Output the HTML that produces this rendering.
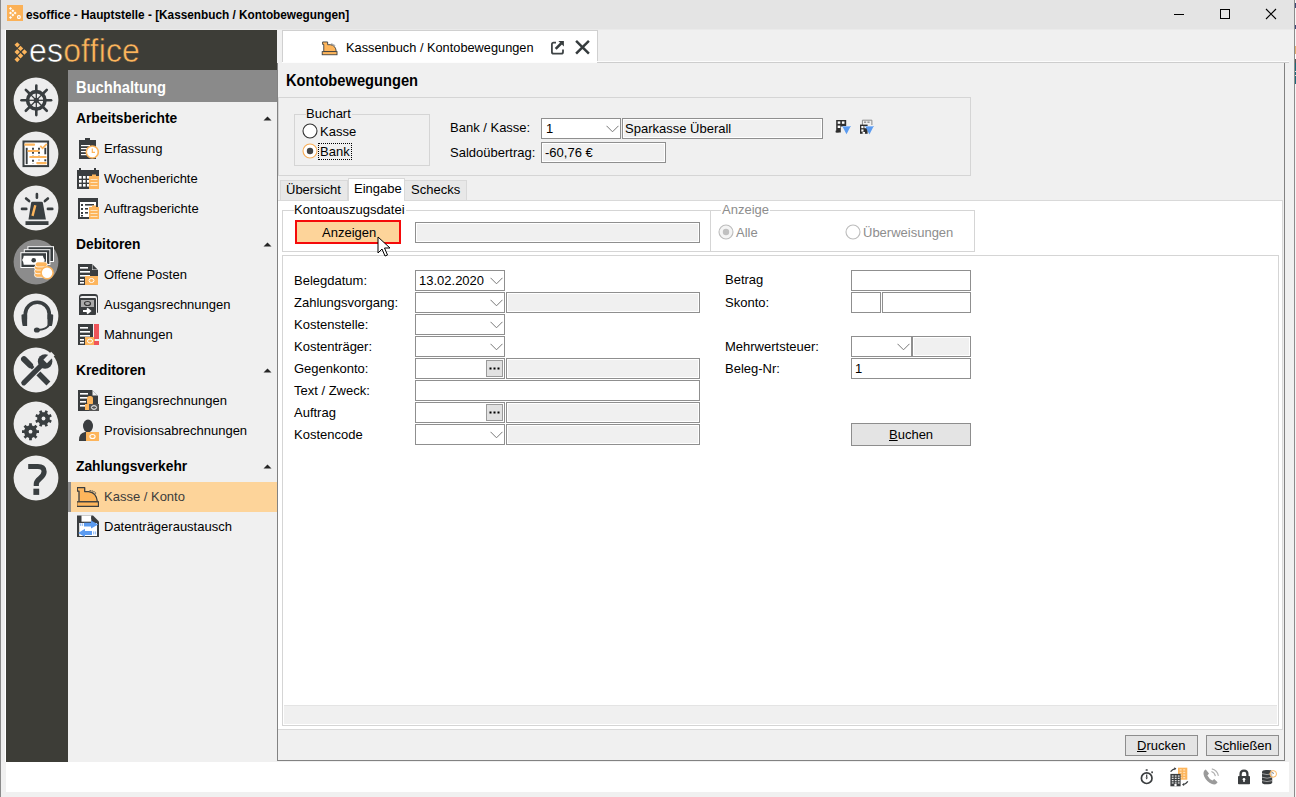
<!DOCTYPE html>
<html><head><meta charset="utf-8">
<style>
*{box-sizing:border-box;margin:0;padding:0}
html,body{width:1296px;height:797px;overflow:hidden;background:#f0f0f0;font-family:"Liberation Sans",sans-serif;font-size:13px;color:#000}
body{position:relative}
.a{position:absolute}
.t{position:absolute;white-space:nowrap;line-height:1;font-size:13px}
.sx{transform-origin:0 0;display:inline-block}
</style></head><body>
<div class="a" style="left:0px;top:0px;width:1px;height:797px;background:#8a8a8a"></div>
<div class="a" style="left:1px;top:0px;width:1293px;height:29px;background:#e4e4e4"></div>
<div class="a" style="left:1px;top:29px;width:1293px;height:1px;background:#eaeaea"></div>
<div class="a" style="left:1294px;top:0px;width:1px;height:797px;background:#8c8c8c"></div>
<div class="a" style="left:1295px;top:0px;width:1px;height:797px;background:#f4f4f4"></div>
<div class="a" style="left:1295px;top:3px;width:1px;height:5px;background:#3a4a7a"></div>
<div class="a" style="left:1295px;top:25px;width:1px;height:4px;background:#3a4a7a"></div>
<div class="a" style="left:1295px;top:46px;width:1px;height:8px;background:#e0b070"></div>
<div class="a" style="left:1295px;top:54px;width:1px;height:5px;background:#fff"></div>
<div class="a" style="left:1295px;top:59px;width:1px;height:4px;background:#555"></div>
<div class="a" style="left:1295px;top:63px;width:1px;height:21px;background:#1b6a7a"></div>
<div class="a" style="left:1295px;top:71px;width:1px;height:1px;background:#e0e0e0"></div>
<div class="a" style="left:1295px;top:75px;width:1px;height:1px;background:#e0e0e0"></div>
<svg class="a" style="left:7px;top:5px" width="16" height="16" viewBox="0 0 16 16"><rect width="16" height="16" fill="#fbb157"/><g fill="#fff"><rect x="2.45" y="2.45" width="2.1" height="2.1" transform="rotate(45 3.5 3.5)"/><rect x="4.80" y="4.80" width="2.1" height="2.1" transform="rotate(45 5.85 5.85)"/><rect x="2.45" y="6.90" width="2.1" height="2.1" transform="rotate(45 3.5 7.95)"/><rect x="7.05" y="6.90" width="2.1" height="2.1" transform="rotate(45 8.1 7.95)"/><rect x="4.80" y="9.05" width="2.1" height="2.1" transform="rotate(45 5.85 10.1)"/><rect x="2.45" y="11.45" width="2.1" height="2.1" transform="rotate(45 3.5 12.5)"/></g><rect x="10.6" y="10.6" width="2.6" height="2.8" rx="1" fill="none" stroke="#fff" stroke-width="1.1"/></svg>
<div class="t" style="left:26px;top:9px;font-size:12px;color:#000;font-weight:bold;"><span class="sx" style="transform:scaleX(0.983)">esoffice - Hauptstelle - [Kassenbuch / Kontobewegungen]</span></div>
<div class="a" style="left:1174px;top:14px;width:10px;height:1px;background:#000"></div>
<div class="a" style="left:1220px;top:9px;width:10px;height:10px;border:1px solid #000"></div>
<svg class="a" style="left:1265px;top:8px" width="12" height="12" viewBox="0 0 12 12"><path d="M1 1L11 11M11 1L1 11" stroke="#000" stroke-width="1.1"/></svg>
<div class="a" style="left:1px;top:30px;width:4px;height:732px;background:#eeeeee"></div>
<div class="a" style="left:5px;top:30px;width:1px;height:732px;background:#ffffff"></div>
<div class="a" style="left:6px;top:30px;width:271px;height:40px;background:#3d3d37"></div>
<div class="a" style="left:6px;top:70px;width:62px;height:692px;background:#3d3d37"></div>
<svg class="a" style="left:12px;top:40px" width="16" height="24" viewBox="0 0 16 24"><rect x="3.2999999999999994" y="2.9500000000000015" width="3.8" height="3.8" transform="rotate(45 5.199999999999999 4.850000000000001)" fill="#fdb55c"/><rect x="6.65" y="6.499999999999998" width="3.8" height="3.8" transform="rotate(45 8.55 8.399999999999999)" fill="#fdb55c"/><rect x="10.499999999999998" y="10.149999999999997" width="3.8" height="3.8" transform="rotate(45 12.399999999999999 12.049999999999997)" fill="#fdb55c"/><rect x="3.2999999999999994" y="10.149999999999997" width="3.8" height="3.8" transform="rotate(45 5.199999999999999 12.049999999999997)" fill="#fdb55c"/><rect x="6.65" y="13.85" width="3.8" height="3.8" transform="rotate(45 8.55 15.75)" fill="#fdb55c"/><rect x="3.2999999999999994" y="17.550000000000004" width="3.8" height="3.8" transform="rotate(45 5.199999999999999 19.450000000000003)" fill="#fdb55c"/></svg>
<div class="t" style="left:29px;top:33px;font-size:34px;color:#fff;-webkit-text-stroke:0.55px #3d3d37;letter-spacing:0.2px;"><span class="sx" style="transform:scaleX(0.94)">es<span style="color:#fdb55c">office</span></span></div>
<svg class="a" style="left:13px;top:77px" width="46" height="46" viewBox="0 0 46 46"><circle cx="23" cy="23" r="22.4" fill="#ededed"/><g transform="translate(23.3 23.3)"><g stroke="#393e40" stroke-linecap="round"><line x1="0" y1="0" x2="8.00" y2="0.00" stroke-width="1.3" stroke-linecap="butt"/><line x1="10.00" y1="0.00" x2="14.80" y2="0.00" stroke-width="2.6"/><line x1="0" y1="0" x2="5.66" y2="5.66" stroke-width="1.3" stroke-linecap="butt"/><line x1="7.07" y1="7.07" x2="10.47" y2="10.47" stroke-width="2.6"/><line x1="0" y1="0" x2="0.00" y2="8.00" stroke-width="1.3" stroke-linecap="butt"/><line x1="0.00" y1="10.00" x2="0.00" y2="14.80" stroke-width="2.6"/><line x1="0" y1="0" x2="-5.66" y2="5.66" stroke-width="1.3" stroke-linecap="butt"/><line x1="-7.07" y1="7.07" x2="-10.47" y2="10.47" stroke-width="2.6"/><line x1="0" y1="0" x2="-8.00" y2="0.00" stroke-width="1.3" stroke-linecap="butt"/><line x1="-10.00" y1="0.00" x2="-14.80" y2="0.00" stroke-width="2.6"/><line x1="0" y1="0" x2="-5.66" y2="-5.66" stroke-width="1.3" stroke-linecap="butt"/><line x1="-7.07" y1="-7.07" x2="-10.47" y2="-10.47" stroke-width="2.6"/><line x1="0" y1="0" x2="-0.00" y2="-8.00" stroke-width="1.3" stroke-linecap="butt"/><line x1="-0.00" y1="-10.00" x2="-0.00" y2="-14.80" stroke-width="2.6"/><line x1="0" y1="0" x2="5.66" y2="-5.66" stroke-width="1.3" stroke-linecap="butt"/><line x1="7.07" y1="-7.07" x2="10.47" y2="-10.47" stroke-width="2.6"/></g><circle r="8.7" fill="none" stroke="#393e40" stroke-width="3.6"/><circle r="2.6" fill="#393e40"/></g></svg>
<svg class="a" style="left:13px;top:131px" width="46" height="46" viewBox="0 0 46 46"><circle cx="23" cy="23" r="22.4" fill="#ededed"/><g transform="translate(23.3 23.3)"><rect x="-12.8" y="-12.8" width="24.6" height="24.6" fill="#fff" stroke="#393e40" stroke-width="2"/><g stroke="#393e40" stroke-width="1.9"><line x1="-9.6" y1="-6.5" x2="-9.6" y2="9.8"/><line x1="-3.3" y1="-6.5" x2="-3.3" y2="9.8" stroke-dasharray="2 2"/><line x1="2.7" y1="-6.5" x2="2.7" y2="6" stroke-dasharray="2 2"/><line x1="9" y1="-6.5" x2="9" y2="0"/><line x1="9" y1="5" x2="9" y2="7"/></g><g stroke="#fdb55c" stroke-width="2.2" stroke-linecap="round"><line x1="-11" y1="-9.6" x2="-2.3" y2="-9.6"/><line x1="-8" y1="-3.3" x2="2.4" y2="-3.3"/><line x1="-6" y1="2.7" x2="9.4" y2="2.7"/><line x1="1" y1="8.8" x2="9.4" y2="8.8"/></g><path d="M4 -8.4L6.3 -6L10.5 -10.5" fill="none" stroke="#fdb55c" stroke-width="1.8"/></g></svg>
<svg class="a" style="left:13px;top:185px" width="46" height="46" viewBox="0 0 46 46"><circle cx="23" cy="23" r="22.4" fill="#ededed"/><g transform="translate(23.3 23.3)"><rect x="-10.8" y="12.9" width="23" height="3.8" fill="#393e40"/><path d="M-5.2 -5.4Q-5.2 -6.6 -3.8 -6.6L5.2 -6.6Q6.6 -6.6 6.6 -5.4L9.6 11.2L-7.8 11.2Z" fill="#393e40"/><line x1="-1" y1="-3" x2="-3.8" y2="7.6" stroke="#fdb55c" stroke-width="2.4"/><g stroke="#393e40" stroke-width="2.6" stroke-linecap="round"><line x1="0.6" y1="-14.3" x2="0.6" y2="-10.6"/><line x1="-10.2" y1="-9.8" x2="-7.2" y2="-7.2"/><line x1="11.6" y1="-9.8" x2="8.6" y2="-7.2"/><line x1="-14.3" y1="0.6" x2="-10" y2="0.6"/><line x1="11.6" y1="0.6" x2="16" y2="0.6"/></g></g></svg>
<svg class="a" style="left:13px;top:239px" width="46" height="46" viewBox="0 0 46 46"><circle cx="23" cy="23" r="22.4" fill="#8c8c8c"/><g transform="translate(23.3 23.3)"><rect x="-8.4" y="-15.6" width="25.6" height="14.8" fill="#393e40" stroke="#fff" stroke-width="1"/><rect x="-12" y="-12.6" width="25.6" height="14.8" fill="#393e40" stroke="#fff" stroke-width="1"/><rect x="-15.4" y="-9.6" width="25.6" height="14.8" fill="#393e40" stroke="#fff" stroke-width="1"/><path d="M-12.6 -6.6L6.6 -6.6Q7 -4 8.6 -2.4Q7 -0.8 6.6 2.4L-12.6 2.4Q-12.8 -0.6 -14.2 -2.2Q-12.8 -3.8 -12.6 -6.6Z" fill="#fff"/><circle cx="-2.6" cy="-2.1" r="2.3" fill="#393e40"/><g fill="#fdb55c" stroke="#fff" stroke-width="0.8"><rect x="-1.8" y="10" width="13" height="5" rx="2.5"/><rect x="-1.8" y="6.4" width="13" height="5" rx="2.5"/><rect x="-1.8" y="2.8" width="13" height="5" rx="2.5"/><rect x="-1" y="-0.4" width="12" height="5" rx="2.5"/></g><circle cx="10.8" cy="10.4" r="6" fill="#fff" stroke="#fdb55c" stroke-width="1.6"/></g></svg>
<svg class="a" style="left:13px;top:293px" width="46" height="46" viewBox="0 0 46 46"><circle cx="23" cy="23" r="22.4" fill="#ededed"/><g transform="translate(23.3 23.3)"><path d="M-11 3 L-11 -2 A12 12 0 0 1 13 -2 L13 3" fill="none" stroke="#393e40" stroke-width="3.6"/><path d="M-14.8 -1.2Q-14.8 -2 -13 -2L-9.2 -2L-9.2 9.6L-13.5 9.6Q-14.8 6 -14.8 -1.2Z" fill="#393e40"/><path d="M16.9 -1.2Q16.9 -2 15 -2L11.2 -2L11.2 9.6L15.5 9.6Q16.9 6 16.9 -1.2Z" fill="#393e40"/><path d="M13 8 Q11 13 2 13.6" fill="none" stroke="#393e40" stroke-width="2"/><ellipse cx="0.6" cy="13.7" rx="3" ry="2.6" fill="#393e40"/></g></svg>
<svg class="a" style="left:13px;top:347px" width="46" height="46" viewBox="0 0 46 46"><circle cx="23" cy="23" r="22.4" fill="#ededed"/><g transform="translate(23.3 23.3)"><g transform="scale(1.1)"><line x1="-11.2" y1="-10.2" x2="-5.6" y2="-4.6" stroke="#393e40" stroke-width="5.4" stroke-linecap="round"/><line x1="-6" y1="-5" x2="0" y2="1" stroke="#393e40" stroke-width="3.2"/><line x1="-1" y1="0" x2="11" y2="12" stroke="#393e40" stroke-width="5"/><g stroke="#ededed" stroke-width="1.2"><line x1="-11.4" y1="11.4" x2="3.6" y2="-3.6" stroke-width="6.6" stroke-linecap="round"/></g><line x1="-11.4" y1="11.4" x2="3.6" y2="-3.6" stroke="#393e40" stroke-width="4.6" stroke-linecap="round"/><circle cx="8" cy="-8" r="6.6" fill="#393e40"/><rect x="-2.3" y="-5" width="4.6" height="10" fill="#ededed" transform="translate(11.6 -11.6) rotate(45)"/></g></g></svg>
<svg class="a" style="left:13px;top:401px" width="46" height="46" viewBox="0 0 46 46"><circle cx="23" cy="23" r="22.4" fill="#ededed"/><g transform="translate(23.3 23.3)"><path d="M13.41 -4.72 L15.47 -3.84 L14.43 -1.34 L12.35 -2.18 L11.65 -1.35 L10.82 -0.65 L11.66 1.43 L9.16 2.47 L8.28 0.41 L7.20 0.50 L6.12 0.41 L5.24 2.47 L2.74 1.43 L3.58 -0.65 L2.75 -1.35 L2.05 -2.18 L-0.03 -1.34 L-1.07 -3.84 L0.99 -4.72 L0.90 -5.80 L0.99 -6.88 L-1.07 -7.76 L-0.03 -10.26 L2.05 -9.42 L2.75 -10.25 L3.58 -10.95 L2.74 -13.03 L5.24 -14.07 L6.12 -12.01 L7.20 -12.10 L8.28 -12.01 L9.16 -14.07 L11.66 -13.03 L10.82 -10.95 L11.65 -10.25 L12.35 -9.42 L14.43 -10.26 L15.47 -7.76 L13.41 -6.88 L13.50 -5.80Z" fill="#393e40"/><circle cx="7.2" cy="-5.8" r="1.9" fill="#ededed"/><path d="M0.45 6.00 L2.69 6.03 L2.69 8.77 L0.45 8.80 L0.11 9.85 L-0.40 10.83 L1.17 12.43 L-0.77 14.37 L-2.37 12.80 L-3.35 13.31 L-4.40 13.65 L-4.43 15.89 L-7.17 15.89 L-7.20 13.65 L-8.25 13.31 L-9.23 12.80 L-10.83 14.37 L-12.77 12.43 L-11.20 10.83 L-11.71 9.85 L-12.05 8.80 L-14.29 8.77 L-14.29 6.03 L-12.05 6.00 L-11.71 4.95 L-11.20 3.97 L-12.77 2.37 L-10.83 0.43 L-9.23 2.00 L-8.25 1.49 L-7.20 1.15 L-7.17 -1.09 L-4.43 -1.09 L-4.40 1.15 L-3.35 1.49 L-2.37 2.00 L-0.77 0.43 L1.17 2.37 L-0.40 3.97 L0.11 4.95Z" fill="#393e40"/><circle cx="-5.8" cy="7.4" r="1.9" fill="#ededed"/></g></svg>
<svg class="a" style="left:13px;top:455px" width="46" height="46" viewBox="0 0 46 46"><circle cx="23" cy="23" r="22.4" fill="#ededed"/><g transform="translate(23.3 23.3)"><path d="M-8.1 -11.8L1.6 -11.8Q7.8 -11.8 7.8 -6.6Q7.8 -3.4 3.6 0.2Q0 3.2 0 5.6L0 7.6" fill="none" stroke="#393e40" stroke-width="5.2" stroke-linejoin="round"/><rect x="-2.9" y="10.4" width="5.8" height="6.2" fill="#393e40"/></g></svg>
<div class="a" style="left:68px;top:70px;width:209px;height:32px;background:#8a8a8a"></div>
<div class="t" style="left:76px;top:80px;font-size:16px;color:#fff;font-weight:bold;"><span class="sx" style="transform:scaleX(0.92)">Buchhaltung</span></div>
<div class="a" style="left:68px;top:482px;width:209px;height:30px;background:#fdd49a"></div>
<div class="a" style="left:68px;top:482px;width:3px;height:30px;background:#8c8c8c"></div>
<div class="t" style="left:76px;top:110px;font-size:15px;color:#000;font-weight:bold;"><span class="sx" style="transform:scaleX(0.92)">Arbeitsberichte</span></div>
<svg class="a" style="left:263px;top:115.7px" width="9" height="5" viewBox="0 0 9 5"><path d="M0.5 4.5L4.5 0.5L8.5 4.5Z" fill="#262626"/></svg>
<div class="t" style="left:104px;top:142px;font-size:13px;color:#000;">Erfassung</div>
<svg class="a" style="left:77px;top:137px" width="22" height="22" viewBox="0 0 22 22"><rect x="2" y="3" width="17" height="19" fill="#3a3d3f"/><rect x="8" y="1" width="5" height="3" fill="#3a3d3f"/><g fill="#fff"><rect x="4" y="8" width="9" height="1.2"/><rect x="4" y="11" width="6" height="1.2"/><rect x="4" y="14" width="5" height="1.2"/><rect x="4" y="17" width="5" height="1.2"/></g><circle cx="15.3" cy="15" r="6" fill="#fff" stroke="#fdb55c" stroke-width="1.6"/><path d="M15.3 11.5V15.3H18" fill="none" stroke="#fdb55c" stroke-width="1.2"/></svg>
<div class="t" style="left:104px;top:172px;font-size:13px;color:#000;">Wochenberichte</div>
<svg class="a" style="left:77px;top:167px" width="22" height="22" viewBox="0 0 22 22"><rect x="0" y="3" width="22" height="19" fill="#3a3d3f"/><rect x="2" y="1" width="2" height="3" fill="#3a3d3f"/><rect x="17" y="1" width="2" height="3" fill="#3a3d3f"/><g fill="#fff"><rect x="2" y="9" width="2.6" height="2.6"/><rect x="6" y="9" width="2.6" height="2.6"/><rect x="10" y="9" width="2.6" height="2.6"/><rect x="2" y="13" width="2.6" height="2.6"/><rect x="6" y="13" width="2.6" height="2.6"/><rect x="10" y="13" width="2.6" height="2.6"/><rect x="2" y="17" width="2.6" height="2.6"/><rect x="6" y="17" width="2.6" height="2.6"/><rect x="10" y="17" width="2.6" height="2.6"/></g><rect x="12" y="9" width="10" height="13" fill="#fdb55c"/><rect x="15" y="7.5" width="4" height="2.5" fill="#fdb55c"/><g fill="#fde4c0"><rect x="13.5" y="12" width="7" height="1"/><rect x="13.5" y="15" width="7" height="1"/><rect x="13.5" y="18" width="7" height="1"/></g></svg>
<div class="t" style="left:104px;top:202px;font-size:13px;color:#000;">Auftragsberichte</div>
<svg class="a" style="left:77px;top:197px" width="22" height="22" viewBox="0 0 22 22"><rect x="1" y="1" width="20" height="21" fill="#3a3d3f"/><rect x="3" y="5" width="16" height="15" fill="#fff"/><g fill="#3a3d3f"><rect x="4" y="7" width="2" height="2"/><rect x="4" y="11" width="2" height="2"/><rect x="4" y="15" width="2" height="2"/><rect x="4" y="18" width="2" height="1.5"/><rect x="8" y="7" width="9" height="1.6"/><rect x="8" y="11" width="3" height="1.6"/><rect x="8" y="15" width="3" height="1.6"/></g><rect x="12" y="10" width="10" height="12" fill="#fdb55c"/><rect x="15" y="8.5" width="4" height="2.5" fill="#fdb55c"/><g fill="#fde4c0"><rect x="13.5" y="13" width="7" height="1"/><rect x="13.5" y="16" width="7" height="1"/><rect x="13.5" y="19" width="7" height="1"/></g></svg>
<div class="t" style="left:76px;top:236px;font-size:15px;color:#000;font-weight:bold;"><span class="sx" style="transform:scaleX(0.92)">Debitoren</span></div>
<svg class="a" style="left:263px;top:241.7px" width="9" height="5" viewBox="0 0 9 5"><path d="M0.5 4.5L4.5 0.5L8.5 4.5Z" fill="#262626"/></svg>
<div class="t" style="left:104px;top:268px;font-size:13px;color:#000;">Offene Posten</div>
<svg class="a" style="left:77px;top:263px" width="22" height="22" viewBox="0 0 22 22"><path d="M1 1H15L21 7V22H1Z" fill="#3a3d3f"/><path d="M15 1V7H21" fill="#f0f0f0"/><path d="M15.5 1.5V6.5H20.5" fill="#3a3d3f"/><g fill="#fff"><rect x="3" y="4" width="8" height="1.6"/><rect x="3" y="8" width="10" height="1.6"/><rect x="3" y="12" width="10" height="1.6"/><rect x="3" y="16" width="4" height="1.6"/><rect x="3" y="19" width="4" height="1.6"/></g><rect x="8" y="13" width="13" height="9" fill="#fdb55c"/><ellipse cx="14.5" cy="17.5" rx="2.5" ry="2" fill="none" stroke="#fff" stroke-width="1"/></svg>
<div class="t" style="left:104px;top:298px;font-size:13px;color:#000;">Ausgangsrechnungen</div>
<svg class="a" style="left:77px;top:293px" width="22" height="22" viewBox="0 0 22 22"><path d="M2 4Q2 1 5 1H18Q21 1 21 4V19Q21 20 20 20V5Q20 3 18 3H5Q3 3 3 5V22H2Z" fill="#3a3d3f"/><rect x="2" y="5" width="17" height="17" rx="1" fill="#3a3d3f"/><rect x="4" y="7" width="13" height="7" fill="#aaa"/><ellipse cx="10.5" cy="10.5" rx="3" ry="2" fill="none" stroke="#333" stroke-width="1.2"/><path d="M6 18H12M10 15.5L13 18L10 20.5" fill="none" stroke="#fff" stroke-width="2"/></svg>
<div class="t" style="left:104px;top:328px;font-size:13px;color:#000;">Mahnungen</div>
<svg class="a" style="left:77px;top:323px" width="22" height="22" viewBox="0 0 22 22"><path d="M1 1H16V22H1Z" fill="#3a3d3f"/><g fill="#fff"><rect x="3" y="4" width="8" height="1.6"/><rect x="3" y="8" width="10" height="1.6"/><rect x="3" y="12" width="10" height="1.6"/><rect x="3" y="16" width="4" height="1.6"/><rect x="3" y="19" width="4" height="1.6"/></g><rect x="8" y="14" width="10" height="8" fill="#fdb55c"/><ellipse cx="13" cy="18" rx="2.5" ry="2" fill="none" stroke="#fff" stroke-width="1"/><rect x="17" y="1" width="5" height="15" fill="#f0555a"/><rect x="17" y="18" width="5" height="4" fill="#f0555a"/></svg>
<div class="t" style="left:76px;top:362px;font-size:15px;color:#000;font-weight:bold;"><span class="sx" style="transform:scaleX(0.92)">Kreditoren</span></div>
<svg class="a" style="left:263px;top:367.7px" width="9" height="5" viewBox="0 0 9 5"><path d="M0.5 4.5L4.5 0.5L8.5 4.5Z" fill="#262626"/></svg>
<div class="t" style="left:104px;top:394px;font-size:13px;color:#000;">Eingangsrechnungen</div>
<svg class="a" style="left:77px;top:389px" width="22" height="22" viewBox="0 0 22 22"><path d="M1 1H15L21 7V22H1Z" fill="#3a3d3f"/><path d="M15.5 1.5V6.5H20.5" fill="#f0f0f0"/><g fill="#fff"><rect x="3" y="4" width="8" height="1.6"/><rect x="3" y="8" width="8" height="1.6"/><rect x="3" y="12" width="6" height="1.6"/><rect x="3" y="16" width="6" height="1.6"/></g><rect x="10" y="7" width="6" height="9" rx="2.5" fill="#fdb55c"/><rect x="8" y="15" width="4" height="6" fill="#fdb55c"/><rect x="12" y="15" width="10" height="7" fill="#555"/><ellipse cx="17" cy="18.5" rx="2.6" ry="1.8" fill="none" stroke="#fff" stroke-width="1"/></svg>
<div class="t" style="left:104px;top:424px;font-size:13px;color:#000;">Provisionsabrechnungen</div>
<svg class="a" style="left:77px;top:419px" width="22" height="22" viewBox="0 0 22 22"><ellipse cx="11" cy="7" rx="5" ry="6.5" fill="#3a3d3f"/><path d="M2 21Q2 14 8 13H14V22H2Z" fill="#3a3d3f"/><rect x="9" y="13" width="13" height="9" fill="#fdb55c"/><ellipse cx="15.5" cy="17.5" rx="2.6" ry="2" fill="none" stroke="#fff" stroke-width="1.1"/></svg>
<div class="t" style="left:76px;top:458px;font-size:15px;color:#000;font-weight:bold;"><span class="sx" style="transform:scaleX(0.92)">Zahlungsverkehr</span></div>
<svg class="a" style="left:263px;top:463.7px" width="9" height="5" viewBox="0 0 9 5"><path d="M0.5 4.5L4.5 0.5L8.5 4.5Z" fill="#262626"/></svg>
<div class="t" style="left:104px;top:490px;font-size:13px;color:#3c3c3c;">Kasse / Konto</div>
<svg class="a" style="left:77px;top:485px" width="22" height="22" viewBox="0 0 22 22"><path d="M0.3 2.6H7.7V6.6H11.6Q19.6 7.4 20.4 16.8H2V6.2H0.3Z" fill="#fdb55c" stroke="#3a3d3f" stroke-width="1.3" stroke-linejoin="round"/><rect x="-0.3" y="16.8" width="21.8" height="4.6" fill="#fdb55c" stroke="#3a3d3f" stroke-width="1.3"/><path d="M12.6 5.6Q16.5 5.6 19.3 8.8" fill="none" stroke="#3a3d3f" stroke-width="1.1" stroke-dasharray="1.2 0.8"/></svg>
<div class="t" style="left:104px;top:520px;font-size:13px;color:#000;">Datenträgeraustausch</div>
<svg class="a" style="left:77px;top:515px" width="22" height="22" viewBox="0 0 22 22"><path d="M0 0.5H16L22 6.5V23H0Z" fill="#3a3d3f"/><rect x="4.5" y="0.5" width="9.8" height="6.2" fill="#fff"/><rect x="14.3" y="1.3" width="1.8" height="3" fill="#3a3d3f"/><rect x="2.2" y="8" width="17.8" height="13" fill="#fff"/><path d="M7 7.7H14V5.6L21.3 9.6L14 13.6V11.5H7Z" fill="#5b9bf0"/><g fill="#9cc2f7"><rect x="3" y="8.3" width="1.2" height="2.6"/><rect x="4.9" y="8.3" width="1.2" height="2.6"/></g><path d="M15 16H8V13.8L1.2 18L8 22.1V19.9H15Z" fill="#5b9bf0"/><g fill="#9cc2f7"><rect x="16" y="16.4" width="1.2" height="3"/><rect x="17.9" y="16.4" width="1.2" height="3"/></g></svg>
<div class="a" style="left:6px;top:762px;width:1283px;height:30px;background:#ffffff"></div>
<div class="a" style="left:282px;top:30px;width:316px;height:32px;background:#fff;border:1px solid #d0d0d0;border-bottom:none"></div>
<svg class="a" style="left:321px;top:41px" width="17" height="15" viewBox="0 0 17 15"><g transform="translate(1.4 -0.8) scale(0.68)"><path d="M0.3 2.6H7.7V6.6H11.6Q19.6 7.4 20.4 16.8H2V6.2H0.3Z" fill="#fdb55c" stroke="#3a3d3f" stroke-width="1.3" stroke-linejoin="round"/><rect x="-0.3" y="16.8" width="21.8" height="4.6" fill="#fdb55c" stroke="#3a3d3f" stroke-width="1.3"/><path d="M12.6 5.6Q16.5 5.6 19.3 8.8" fill="none" stroke="#3a3d3f" stroke-width="1.1" stroke-dasharray="1.2 0.8"/></g></svg>
<div class="t" style="left:346px;top:41px;font-size:13px;color:#000;"><span class="sx" style="transform:scaleX(0.983)">Kassenbuch / Kontobewegungen</span></div>
<svg class="a" style="left:550px;top:40px" width="15" height="15" viewBox="0 0 15 15"><path d="M6 2.6H3.6Q1.9 2.6 1.9 4.3V11.9Q1.9 13.6 3.6 13.6H11.3Q13 13.6 13 11.9V9.6" fill="none" stroke="#3f4446" stroke-width="1.8"/><path d="M5.7 8.9L11.2 3.4" stroke="#353b3d" stroke-width="2.6"/><path d="M8.4 1H13.9V6.5Z" fill="#353b3d"/></svg>
<svg class="a" style="left:575px;top:40px" width="15" height="15" viewBox="0 0 15 15"><path d="M1.1 0.9L13.9 13.7M13.9 0.9L1.1 13.7" stroke="#353b3d" stroke-width="2.5"/></svg>
<div class="a" style="left:277px;top:63px;width:1008px;height:698px;border-left:1px solid #828282;border-right:1px solid #828282;border-bottom:1px solid #828282;background:#f0f0f0"></div>
<div class="a" style="left:282px;top:62px;width:316px;height:1px;background:#fdfdfd"></div>
<div class="a" style="left:597px;top:61px;width:692px;height:1px;background:#fcfcfc"></div>
<div class="a" style="left:597px;top:62px;width:692px;height:1px;background:#cdcdcd"></div>
<div class="t" style="left:286px;top:73px;font-size:16px;color:#000;font-weight:bold;"><span class="sx" style="transform:scaleX(0.917)">Kontobewegungen</span></div>
<div class="a" style="left:278px;top:97px;width:693px;height:79px;border:1px solid #d5d5d5"></div>
<div class="a" style="left:294px;top:114px;width:136px;height:52px;border:1px solid #d5d5d5"></div>
<div class="t" style="left:306px;top:107px;font-size:13px;color:#000;background:#f0f0f0;padding-right:1px">Buchart</div>
<svg class="a" style="left:301.5px;top:123.30000000000001px" width="16" height="16" viewBox="0 0 16 16"><circle cx="8" cy="8" r="7" fill="#fff" stroke="#333" stroke-width="1.1"/></svg>
<div class="t" style="left:320px;top:125px;font-size:13px;color:#000;">Kasse</div>
<svg class="a" style="left:301.5px;top:143.4px" width="16" height="16" viewBox="0 0 16 16"><circle cx="8" cy="8" r="7" fill="#fff" stroke="#f7ad57" stroke-width="1.1"/><circle cx="8" cy="8" r="3.2" fill="#444"/></svg>
<div class="t" style="left:320px;top:145px;font-size:13px;color:#000;">Bank</div>
<div class="a" style="left:318px;top:143px;width:34px;height:17px;border:1px dotted #000;width:33.5px"></div>
<div class="t" style="left:450px;top:121px;font-size:13px;color:#000;">Bank / Kasse:</div>
<div class="t" style="left:450px;top:146px;font-size:13px;color:#000;">Saldoübertrag:</div>
<div class="a" style="left:541px;top:118px;width:80px;height:21px;background:#fff;border:1px solid #8f8f8f"></div>
<div class="t" style="left:546px;top:122px;font-size:13px;color:#000;">1</div>
<svg class="a" style="left:606px;top:125px" width="13" height="8" viewBox="0 0 13 8"><path d="M0.5 0.8L6.5 6.8L12.5 0.8" fill="none" stroke="#777" stroke-width="1"/></svg>
<div class="a" style="left:622px;top:118px;width:201px;height:21px;background:#f0f0f0;border:1px solid #8f8f8f;box-shadow:inset 0 0 0 1px #fff"></div>
<div class="t" style="left:625px;top:122px;font-size:13px;color:#000;">Sparkasse Überall</div>
<svg class="a" style="left:835px;top:119px" width="17" height="17" viewBox="0 0 17 17"><path d="M1.2 1H11.2V7.6H5.8V13.4H1.2Z" fill="#2e2e2e"/><g fill="#fff"><rect x="2.7" y="2.4" width="2.6" height="2.4"/><rect x="6.9" y="2.4" width="2.6" height="2.4"/><rect x="2.7" y="6.6" width="2.6" height="2.4"/></g><rect x="0.6" y="11.6" width="3" height="1.8" fill="#2e2e2e"/><path d="M7.2 7H15.8L11.5 15.3Z" fill="#5b9bf0"/><rect x="7.6" y="7" width="7.8" height="1" fill="#8fbaf5"/></svg>
<svg class="a" style="left:858px;top:119px" width="17" height="17" viewBox="0 0 17 17"><path d="M4.4 6V1.2H13.9V6" fill="none" stroke="#8a8a8a" stroke-width="1"/><g fill="#9a9a9a"><rect x="6" y="2.4" width="2.2" height="1.6"/><rect x="9.4" y="2.4" width="2.2" height="1.6"/></g><path d="M2 5.6H9.6V14.8H2Z" fill="#2e2e2e"/><g fill="#fff"><rect x="3.3" y="7" width="2.2" height="2.2"/><rect x="3.3" y="10.4" width="2.2" height="2.2"/><rect x="6.4" y="7" width="2.2" height="2.2"/><rect x="4.6" y="13" width="2.4" height="1.8"/></g><path d="M7.1 7H15.8L11.4 15.5Z" fill="#5b9bf0"/><rect x="7.5" y="7" width="7.9" height="1" fill="#8fbaf5"/></svg>
<div class="a" style="left:541px;top:142px;width:125px;height:21px;background:#f0f0f0;border:1px solid #8f8f8f;box-shadow:inset 0 0 0 1px #fff"></div>
<div class="t" style="left:545px;top:146px;font-size:13px;color:#000;">-60,76 €</div>
<div class="a" style="left:280px;top:180px;width:68px;height:21px;background:#e8e8e8;border:1px solid #d9d9d9;border-bottom:none"></div>
<div class="t" style="left:286px;top:183px;font-size:13px;color:#000;">Übersicht</div>
<div class="a" style="left:404px;top:180px;width:63px;height:21px;background:#e8e8e8;border:1px solid #d9d9d9;border-bottom:none"></div>
<div class="t" style="left:411px;top:183px;font-size:13px;color:#000;">Schecks</div>
<div class="a" style="left:278px;top:200px;width:1005px;height:530px;background:#fff;border:1px solid #d9d9d9;border-left:none"></div>
<div class="a" style="left:348px;top:178px;width:57px;height:23px;background:#fff;border:1px solid #d9d9d9;border-bottom:none"></div>
<div class="t" style="left:354px;top:182px;font-size:13px;color:#000;">Eingabe</div>
<div class="a" style="left:282px;top:210px;width:429px;height:42px;border:1px solid #d5d5d5"></div>
<div class="t" style="left:294px;top:203px;font-size:13px;color:#000;background:#fff;padding-right:1px">Kontoauszugsdatei</div>
<div class="a" style="left:710px;top:210px;width:265px;height:42px;border:1px solid #d5d5d5"></div>
<div class="t" style="left:722px;top:203px;font-size:13px;color:#8d8d8d;background:#fff;padding-left:1px;margin-left:-1px;padding-right:1px">Anzeige</div>
<div class="a" style="left:295px;top:220px;width:106px;height:24px;background:#fdd49a;border:2px solid #f50a0a"></div>
<div class="t" style="left:322px;top:226px;font-size:13px;color:#000;">Anzeigen</div>
<div class="a" style="left:415px;top:222px;width:285px;height:21px;background:#f0f0f0;border:1px solid #8f8f8f;box-shadow:inset 0 0 0 1px #fff"></div>
<svg class="a" style="left:718px;top:224px" width="16" height="16" viewBox="0 0 16 16"><circle cx="8" cy="8" r="7" fill="#f4f4f4" stroke="#bcbcbc" stroke-width="1.1"/><circle cx="8" cy="8" r="3.2" fill="#c0c0c0"/></svg>
<div class="t" style="left:736px;top:226px;font-size:13px;color:#8d8d8d;">Alle</div>
<svg class="a" style="left:845px;top:224px" width="16" height="16" viewBox="0 0 16 16"><circle cx="8" cy="8" r="7" fill="#fff" stroke="#bcbcbc" stroke-width="1.1"/></svg>
<div class="t" style="left:863px;top:226px;font-size:13px;color:#8d8d8d;">Überweisungen</div>
<div class="a" style="left:282px;top:255px;width:997px;height:471px;border:1px solid #d5d5d5"></div>
<div class="a" style="left:284px;top:705px;width:993px;height:19px;background:#f0f0f0;border-top:1px solid #e4e4e4"></div>
<div class="t" style="left:294px;top:274px;font-size:13px;color:#000;">Belegdatum:</div>
<div class="t" style="left:294px;top:296px;font-size:13px;color:#000;">Zahlungsvorgang:</div>
<div class="t" style="left:294px;top:318px;font-size:13px;color:#000;">Kostenstelle:</div>
<div class="t" style="left:294px;top:340px;font-size:13px;color:#000;">Kostenträger:</div>
<div class="t" style="left:294px;top:362px;font-size:13px;color:#000;">Gegenkonto:</div>
<div class="t" style="left:294px;top:384px;font-size:13px;color:#000;">Text / Zweck:</div>
<div class="t" style="left:294px;top:406px;font-size:13px;color:#000;">Auftrag</div>
<div class="t" style="left:294px;top:428px;font-size:13px;color:#000;">Kostencode</div>
<div class="a" style="left:415px;top:270px;width:90px;height:21px;background:#fff;border:1px solid #8f8f8f"></div>
<svg class="a" style="left:490px;top:277px" width="13" height="8" viewBox="0 0 13 8"><path d="M0.5 0.8L6.5 6.8L12.5 0.8" fill="none" stroke="#777" stroke-width="1"/></svg>
<div class="t" style="left:419px;top:274px;font-size:13px;color:#000;">13.02.2020</div>
<div class="a" style="left:415px;top:292px;width:90px;height:21px;background:#fff;border:1px solid #8f8f8f"></div>
<svg class="a" style="left:490px;top:299px" width="13" height="8" viewBox="0 0 13 8"><path d="M0.5 0.8L6.5 6.8L12.5 0.8" fill="none" stroke="#777" stroke-width="1"/></svg>
<div class="a" style="left:506px;top:292px;width:194px;height:21px;background:#f0f0f0;border:1px solid #8f8f8f;box-shadow:inset 0 0 0 1px #fff"></div>
<div class="a" style="left:415px;top:314px;width:90px;height:21px;background:#fff;border:1px solid #8f8f8f"></div>
<svg class="a" style="left:490px;top:321px" width="13" height="8" viewBox="0 0 13 8"><path d="M0.5 0.8L6.5 6.8L12.5 0.8" fill="none" stroke="#777" stroke-width="1"/></svg>
<div class="a" style="left:415px;top:336px;width:90px;height:21px;background:#fff;border:1px solid #8f8f8f"></div>
<svg class="a" style="left:490px;top:343px" width="13" height="8" viewBox="0 0 13 8"><path d="M0.5 0.8L6.5 6.8L12.5 0.8" fill="none" stroke="#777" stroke-width="1"/></svg>
<div class="a" style="left:415px;top:358px;width:90px;height:21px;background:#fff;border:1px solid #8f8f8f"></div>
<div class="a" style="left:486px;top:360px;width:17px;height:17px;background:#e1e1e1;border:1px solid #9a9a9a"></div>
<svg class="a" style="left:489px;top:367px" width="11" height="3" viewBox="0 0 11 3"><g fill="#000"><rect x="0.5" y="0.5" width="2" height="2"/><rect x="4.5" y="0.5" width="2" height="2"/><rect x="8.5" y="0.5" width="2" height="2"/></g></svg>
<div class="a" style="left:506px;top:358px;width:194px;height:21px;background:#f0f0f0;border:1px solid #8f8f8f;box-shadow:inset 0 0 0 1px #fff"></div>
<div class="a" style="left:415px;top:380px;width:285px;height:21px;background:#fff;border:1px solid #8f8f8f"></div>
<div class="a" style="left:415px;top:402px;width:90px;height:21px;background:#fff;border:1px solid #8f8f8f"></div>
<div class="a" style="left:486px;top:404px;width:17px;height:17px;background:#e1e1e1;border:1px solid #9a9a9a"></div>
<svg class="a" style="left:489px;top:411px" width="11" height="3" viewBox="0 0 11 3"><g fill="#000"><rect x="0.5" y="0.5" width="2" height="2"/><rect x="4.5" y="0.5" width="2" height="2"/><rect x="8.5" y="0.5" width="2" height="2"/></g></svg>
<div class="a" style="left:506px;top:402px;width:194px;height:21px;background:#f0f0f0;border:1px solid #8f8f8f;box-shadow:inset 0 0 0 1px #fff"></div>
<div class="a" style="left:415px;top:424px;width:90px;height:21px;background:#fff;border:1px solid #8f8f8f"></div>
<svg class="a" style="left:490px;top:431px" width="13" height="8" viewBox="0 0 13 8"><path d="M0.5 0.8L6.5 6.8L12.5 0.8" fill="none" stroke="#777" stroke-width="1"/></svg>
<div class="a" style="left:506px;top:424px;width:194px;height:21px;background:#f0f0f0;border:1px solid #8f8f8f;box-shadow:inset 0 0 0 1px #fff"></div>
<div class="t" style="left:725px;top:273px;font-size:13px;color:#000;">Betrag</div>
<div class="t" style="left:725px;top:296px;font-size:13px;color:#000;">Skonto:</div>
<div class="t" style="left:725px;top:340px;font-size:13px;color:#000;">Mehrwertsteuer:</div>
<div class="t" style="left:725px;top:362px;font-size:13px;color:#000;">Beleg-Nr:</div>
<div class="a" style="left:851px;top:270px;width:120px;height:21px;background:#fff;border:1px solid #8f8f8f"></div>
<div class="a" style="left:851px;top:292px;width:30px;height:21px;background:#fff;border:1px solid #8f8f8f"></div>
<div class="a" style="left:882px;top:292px;width:89px;height:21px;background:#fff;border:1px solid #8f8f8f"></div>
<div class="a" style="left:851px;top:336px;width:61px;height:21px;background:#fff;border:1px solid #8f8f8f"></div>
<svg class="a" style="left:897px;top:343px" width="13" height="8" viewBox="0 0 13 8"><path d="M0.5 0.8L6.5 6.8L12.5 0.8" fill="none" stroke="#777" stroke-width="1"/></svg>
<div class="a" style="left:912px;top:336px;width:59px;height:21px;background:#f0f0f0;border:1px solid #8f8f8f;box-shadow:inset 0 0 0 1px #fff"></div>
<div class="a" style="left:851px;top:358px;width:120px;height:21px;background:#fff;border:1px solid #8f8f8f"></div>
<div class="t" style="left:855px;top:362px;font-size:13px;color:#000;">1</div>
<div class="a" style="left:851px;top:423px;width:120px;height:23px;background:#e4e4e4;border:1px solid #8d8d8d"></div>
<div class="t" style="left:889px;top:428px;font-size:13px;color:#000;"><u>B</u>uchen</div>
<div class="a" style="left:1125px;top:735px;width:73px;height:21px;background:#e4e4e4;border:1px solid #8d8d8d"></div>
<div class="t" style="left:1137px;top:739px;font-size:13px;color:#000;"><u>D</u>rucken</div>
<div class="a" style="left:1206px;top:735px;width:73px;height:21px;background:#e4e4e4;border:1px solid #8d8d8d"></div>
<div class="t" style="left:1214px;top:739px;font-size:13px;color:#000;">S<u>c</u>hließen</div>
<svg class="a" style="left:377px;top:236px" width="14" height="22" viewBox="0 0 14 22"><path d="M1 1L1 17L5 13L8 20L10.5 19L7.5 12L13 12Z" fill="#fff" stroke="#000" stroke-width="1"/></svg>
<svg class="a" style="left:1139px;top:768px" width="16" height="18" viewBox="0 0 16 18"><circle cx="7.7" cy="10.2" r="5.3" fill="none" stroke="#3a3d3f" stroke-width="1.7"/><rect x="6.6" y="1.2" width="2.2" height="1.6" rx="0.6" fill="#3a3d3f"/><path d="M7.7 6.6V9.4" stroke="#3a3d3f" stroke-width="1.2"/><path d="M6.5 9.4H8.9L7.7 11.6Z" fill="#3a3d3f"/><rect x="12.3" y="3.4" width="1.6" height="1.8" fill="#3a3d3f"/></svg>
<svg class="a" style="left:1169px;top:767px" width="21" height="21" viewBox="0 0 21 21"><rect x="9" y="0.7" width="9.3" height="12" fill="#fdb55c"/><g fill="#fde0b8"><rect x="10.6" y="2.2" width="2" height="1.3"/><rect x="14.2" y="2.2" width="2" height="1.3"/><rect x="10.6" y="4.800000000000001" width="2" height="1.3"/><rect x="14.2" y="4.800000000000001" width="2" height="1.3"/><rect x="10.6" y="7.4" width="2" height="1.3"/><rect x="14.2" y="7.4" width="2" height="1.3"/><rect x="10.6" y="10.0" width="2" height="1.3"/><rect x="14.2" y="10.0" width="2" height="1.3"/></g><rect x="1.4" y="6.9" width="10.2" height="12.4" fill="#3a3d3f"/><g fill="#ddd"><rect x="2.8" y="8.4" width="1.8" height="1.3"/><rect x="5.8" y="8.4" width="1.8" height="1.3"/><rect x="8.8" y="8.4" width="1.8" height="1.3"/><rect x="2.8" y="10.7" width="1.8" height="1.3"/><rect x="5.8" y="10.7" width="1.8" height="1.3"/><rect x="8.8" y="10.7" width="1.8" height="1.3"/><rect x="2.8" y="13.0" width="1.8" height="1.3"/><rect x="5.8" y="13.0" width="1.8" height="1.3"/><rect x="8.8" y="13.0" width="1.8" height="1.3"/><rect x="2.8" y="15.3" width="1.8" height="1.3"/><rect x="5.8" y="15.3" width="1.8" height="1.3"/><rect x="8.8" y="15.3" width="1.8" height="1.3"/></g><rect x="5.4" y="17" width="2.2" height="2.3" fill="#fff"/><path d="M1.6 4.7Q3.5 2.2 6.2 1.6" fill="none" stroke="#3a3d3f" stroke-width="1.3"/><path d="M5.2 0.3L7.4 1.5L5.6 3.2Z" fill="#3a3d3f"/><path d="M18.8 14.4Q17 17 14.2 17.6" fill="none" stroke="#3a3d3f" stroke-width="1.3"/><path d="M15.2 19L13 17.7L14.8 16Z" fill="#3a3d3f"/></svg>
<svg class="a" style="left:1202px;top:768px" width="18" height="18" viewBox="0 0 18 18"><path d="M2.6 2.2Q0.6 4.4 2.2 8.4Q4.6 13.6 10 16Q13 17.2 14.8 15.2L15.6 14.2L12.2 11L10.4 12.6Q7.4 11.2 5.4 7.4L7 5.6L3.8 1.6Z" fill="#9a9a9a"/><path d="M9.4 3.6Q12.6 4.6 13.4 8.2M9.8 0.9Q15.2 2.2 16.4 7.8" fill="none" stroke="#b0b0b0" stroke-width="1.1"/></svg>
<svg class="a" style="left:1237px;top:768px" width="14" height="17" viewBox="0 0 14 17"><path d="M3.6 8.5V6Q3.6 2.6 7 2.6Q10.4 2.6 10.4 6V8.5" fill="none" stroke="#3a3d3f" stroke-width="2.3"/><rect x="1" y="8" width="12" height="8.3" rx="0.8" fill="#3a3d3f"/><circle cx="7" cy="11.2" r="1.3" fill="#fff"/><rect x="6.3" y="11.4" width="1.4" height="2.6" fill="#fff"/></svg>
<svg class="a" style="left:1260px;top:768px" width="18" height="18" viewBox="0 0 18 18"><rect x="2" y="1.9" width="10.2" height="14.3" rx="4" ry="2" fill="#3a3d3f"/><g stroke="#b8b8b8" stroke-width="0.8" fill="none"><path d="M2 5.6Q7 7.6 12.2 5.6"/><path d="M2 9.2Q7 11.2 12.2 9.2"/><path d="M2 12.6Q7 14.6 12.2 12.6"/></g><circle cx="13.2" cy="5.9" r="3.3" fill="#fff" fill-opacity="0.7" stroke="#fdb55c" stroke-width="1"/><path d="M12.6 4.2L13.4 5.8" stroke="#3a3d3f" stroke-width="0.8"/></svg>
</body></html>
